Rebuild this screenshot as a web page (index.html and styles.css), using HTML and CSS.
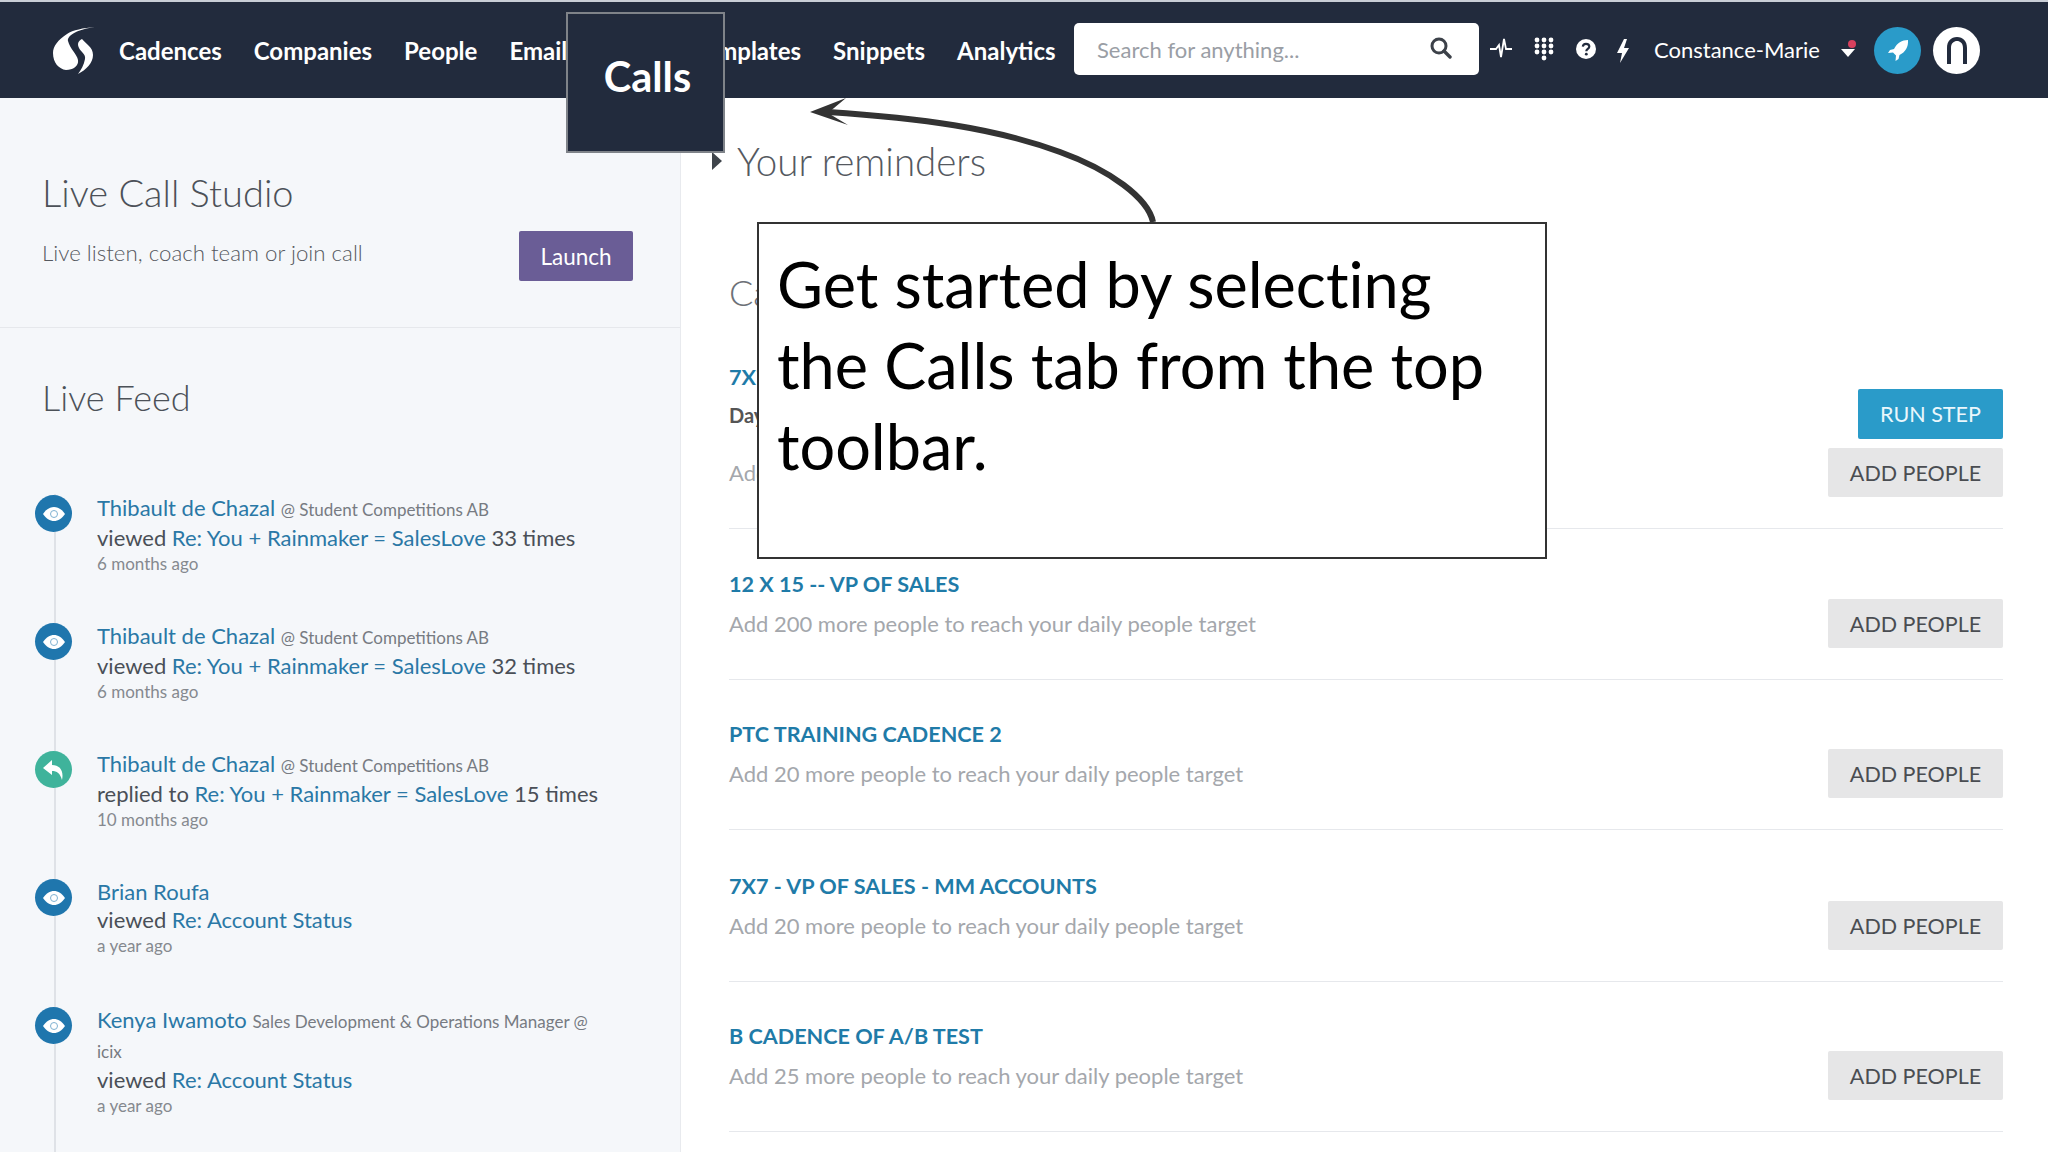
FILE: index.html
```html
<!DOCTYPE html>
<html lang="en">
<head>
<meta charset="utf-8">
<title>Calls</title>
<link rel="stylesheet" href="styles.css">
</head>
<body>
<header class="topbar">
  <svg class="logo" viewBox="0 0 42 47"><path fill="#fff" d="M42 0C30 1 20 3 14 7 5 13 0 19 0 26c0 10 6 16 13 17 7 0 13-4 12-10-1-6-8-11-10-19C14 8 26 2 42 0z"/><path fill="#fff" d="M29 12c-4 2-5 5-3 9 2 4 7 6 6 11-1 6-4 11-7 15 8-4 15-11 15-19 0-8-7-11-11-16z"/></svg>
  <nav class="nav">
    <a>Cadences</a><a>Companies</a><a>People</a><a>Emails</a><a class="after-tab">Templates</a><a>Snippets</a><a>Analytics</a>
  </nav>
  <div class="search">
    <span class="ph">Search for anything...</span>
    <svg class="ic-search" viewBox="0 0 22 22"><circle cx="9" cy="9" r="7" fill="none" stroke="#3c4149" stroke-width="3"/><path d="M14 14l6 6" stroke="#3c4149" stroke-width="3.4" stroke-linecap="round"/></svg>
  </div>
  <svg class="ic ic-pulse" viewBox="0 0 22 24"><path d="M0 12h6l3-4 2 12 3-18 2 10h6" fill="none" stroke="#fff" stroke-width="1.8"/></svg>
  <svg class="ic ic-grid" viewBox="0 0 20 24"><g fill="#fff"><circle cx="3" cy="3" r="2.400"/><circle cx="10" cy="3" r="2.400"/><circle cx="17" cy="3" r="2.400"/><circle cx="3" cy="9" r="2.400"/><circle cx="10" cy="9" r="2.400"/><circle cx="17" cy="9" r="2.400"/><circle cx="3" cy="15" r="2.400"/><circle cx="10" cy="15" r="2.400"/><circle cx="17" cy="15" r="2.400"/><circle cx="10" cy="21" r="2.400"/></g></svg>
  <svg class="ic ic-help" viewBox="0 0 20 20"><circle cx="10" cy="10" r="10" fill="#fff"/><path d="M6.800 7.600C7 5.600 8.400 4.800 10 4.800c2 0 3.300 1.100 3.300 2.700 0 2.400-3 2.300-3 4.700" fill="none" stroke="#222b3d" stroke-width="2.200"/><circle cx="10.300" cy="15.200" r="1.400" fill="#222b3d"/></svg>
  <svg class="ic ic-bolt" viewBox="0 0 12 24"><path fill="#fff" d="M7 0L0 14h5L3 24l9-15H7l3-9z"/></svg>
  <span class="user">Constance-Marie</span>
  <span class="caret"><i class="dot"></i></span>
  <span class="round rocket"><svg viewBox="0 0 24 24" width="24" height="24"><path fill="#fff" d="M22 2c-6 0-11 3-14 9l-4 1-2 3 5-.5 3 3L9.500 23l3-2 1-4c6-3 9-8 8.500-15z"/></svg></span>
  <span class="round avatar"><svg viewBox="0 0 30 34" width="30" height="34"><path d="M5 31V15C5 8 9 4 15 4s10 4 10 11v16h-4V15c0-5-3-7-6-7s-6 2-6 7v16z" fill="#222b3d"/></svg></span>
</header>

<div class="layout">
  <aside class="side">
    <section class="studio">
      <h2 class="h-side">Live Call Studio</h2>
      <div class="studio-row">
        <span class="studio-text">Live listen, coach team or join call</span>
        <button class="launch">Launch</button>
      </div>
    </section>
    <section class="feed">
      <h2 class="h-side">Live Feed</h2>
      <ol class="items">
        <li class="item">
          <span class="badge"><svg class="eye" viewBox="0 0 22 14"><path fill="#fff" d="M0 7c3-4.500 7-7 11-7s8 2.500 11 7c-3 4.500-7 7-11 7S3 11.500 0 7z"/><circle cx="11" cy="7" r="3.500" fill="none" stroke="#7fb2d2" stroke-width="1"/></svg></span>
          <div class="who"><a class="name">Thibault de Chazal</a> <small>@ Student Competitions AB</small></div>
          <div class="what">viewed <a>Re: You + Rainmaker = SalesLove</a> 33 times</div>
          <time>6 months ago</time>
        </li>
        <li class="item">
          <span class="badge"><svg class="eye" viewBox="0 0 22 14"><path fill="#fff" d="M0 7c3-4.500 7-7 11-7s8 2.500 11 7c-3 4.500-7 7-11 7S3 11.500 0 7z"/><circle cx="11" cy="7" r="3.500" fill="none" stroke="#7fb2d2" stroke-width="1"/></svg></span>
          <div class="who"><a class="name">Thibault de Chazal</a> <small>@ Student Competitions AB</small></div>
          <div class="what">viewed <a>Re: You + Rainmaker = SalesLove</a> 32 times</div>
          <time>6 months ago</time>
        </li>
        <li class="item">
          <span class="badge green"><svg class="reply" viewBox="0 0 22 20"><path fill="#fff" d="M9 0L0 8l9 7v-4c5 0 8 2 10 9 2-9-2-15-10-15z"/></svg></span>
          <div class="who"><a class="name">Thibault de Chazal</a> <small>@ Student Competitions AB</small></div>
          <div class="what">replied to <a>Re: You + Rainmaker = SalesLove</a> 15 times</div>
          <time>10 months ago</time>
        </li>
        <li class="item">
          <span class="badge"><svg class="eye" viewBox="0 0 22 14"><path fill="#fff" d="M0 7c3-4.500 7-7 11-7s8 2.500 11 7c-3 4.500-7 7-11 7S3 11.500 0 7z"/><circle cx="11" cy="7" r="3.500" fill="none" stroke="#7fb2d2" stroke-width="1"/></svg></span>
          <div class="who"><a class="name">Brian Roufa</a></div>
          <div class="what">viewed <a>Re: Account Status</a></div>
          <time>a year ago</time>
        </li>
        <li class="item">
          <span class="badge"><svg class="eye" viewBox="0 0 22 14"><path fill="#fff" d="M0 7c3-4.500 7-7 11-7s8 2.500 11 7c-3 4.500-7 7-11 7S3 11.500 0 7z"/><circle cx="11" cy="7" r="3.500" fill="none" stroke="#7fb2d2" stroke-width="1"/></svg></span>
          <div class="who"><a class="name">Kenya Iwamoto</a> <small>Sales Development &amp; Operations Manager @ icix</small></div>
          <div class="what">viewed <a>Re: Account Status</a></div>
          <time>a year ago</time>
        </li>
      </ol>
    </section>
  </aside>

  <main class="main">
    <div class="reminders"><i class="tri"></i><h2>Your reminders</h2></div>
    <h2 class="h-cad">Cadences</h2>
    <div class="row first">
      <div class="row-text">
        <a class="title">7X7 - VP OF SALES</a>
        <div class="day">Day 1</div>
        <div class="desc">Add 20 more people to reach your daily people target</div>
      </div>
      <div class="actions">
        <button class="btn run">RUN STEP</button>
        <button class="btn add">ADD PEOPLE</button>
      </div>
    </div>
    <div class="row second">
      <div class="row-text"><a class="title">12 X 15 -- VP OF SALES</a><div class="desc">Add 200 more people to reach your daily people target</div></div>
      <div class="actions"><button class="btn add">ADD PEOPLE</button></div>
    </div>
    <div class="row">
      <div class="row-text"><a class="title">PTC TRAINING CADENCE 2</a><div class="desc">Add 20 more people to reach your daily people target</div></div>
      <div class="actions"><button class="btn add">ADD PEOPLE</button></div>
    </div>
    <div class="row tall">
      <div class="row-text"><a class="title">7X7 - VP OF SALES - MM ACCOUNTS</a><div class="desc">Add 20 more people to reach your daily people target</div></div>
      <div class="actions"><button class="btn add">ADD PEOPLE</button></div>
    </div>
    <div class="row">
      <div class="row-text"><a class="title">B CADENCE OF A/B TEST</a><div class="desc">Add 25 more people to reach your daily people target</div></div>
      <div class="actions"><button class="btn add">ADD PEOPLE</button></div>
    </div>
  </main>
</div>

<div class="calls-tab">Calls</div>
<svg class="arrow" viewBox="0 0 360 130" width="360" height="130"><path d="M18 14C110 20 185 30 250 54 300 72 338 100 343 124" fill="none" stroke="#333" stroke-width="6"/><path d="M0 14L36 0 18 15 38 27z" fill="#333"/></svg>
<div class="callout">Get started by selecting the Calls tab from the top toolbar.</div>
</body>
</html>
```
FILE: styles.css
```css
* { box-sizing: border-box; }
html, body { margin: 0; padding: 0; }
body {
  width: 2048px; height: 1152px; overflow: hidden; position: relative;
  font-family: Lato, "Liberation Sans", sans-serif; background: #fff; color: #4a4f57;
}
a { color: inherit; text-decoration: none; }
h2 { margin: 0; font-weight: 300; }

.topbar {
  height: 98px; background: #222b3d; border-top: 2px solid #c9ced6;
  display: flex; align-items: center; color: #fff; padding-left: 53px;
}
.logo { width: 42px; height: 47px; flex: none; }
.nav { display: flex; gap: 32px; margin-left: 24px; font-size: 24px; font-weight: 700; width: 930px; flex: none; white-space: nowrap; }
.after-tab { margin-left: 83px; }
.search {
  width: 405px; height: 52px; background: #fff; border-radius: 5px;
  display: flex; align-items: center; justify-content: space-between;
  padding: 0 27px 0 23px; margin-top: -2px; margin-left: 25px; flex: none;
}
.ph { font-size: 22px; color: #9a9ea5; }
.ic-search { width: 22px; height: 22px; margin-top: -2px; }
.ic { flex: none; margin-top: -2px; }
.ic-pulse { width: 22px; height: 24px; margin-left: 11px; }
.ic-grid { width: 20px; height: 24px; margin-left: 22px; }
.ic-help { width: 20px; height: 20px; margin-left: 22px; }
.ic-bolt { width: 12px; height: 24px; margin-left: 21px; margin-top: 1px; }
.user { font-size: 22px; margin: -2px 0 0 25px; width: 166px; flex: none; }
.caret { position: relative; width: 0; height: 0; margin: 6px 0 0 21px; border: 7px solid transparent; border-top: 8px solid #fff; border-bottom: 0; flex: none; }
.dot { position: absolute; left: 0; top: -17px; width: 8px; height: 8px; border-radius: 50%; background: #d8405e; }
.round { width: 47px; height: 47px; border-radius: 50%; display: flex; align-items: center; justify-content: center; flex: none; }
.rocket { background: #2a9bc9; margin-left: 19px; }
.avatar { background: #fff; margin-left: 12px; }

.layout { display: flex; height: 1054px; }
.side { width: 681px; flex: none; background: #f5f7fa; border-right: 1px solid #e8eaee; overflow: hidden; }
.studio { height: 230px; border-bottom: 1px solid #e6e8ec; padding: 72px 47px 0 42px; }
.h-side { font-size: 36px; color: #4c5158; line-height: 44px; }
.studio .h-side { font-size: 38px; }
.studio-row { display: flex; justify-content: space-between; align-items: center; margin-top: 17px; font-size: 22.300px; color: #55595f; font-weight: 300; }
.studio-text { margin-top: -8px; }
.launch { width: 114px; height: 50px; background: #6a5d96; color: #fff; border: 0; border-radius: 2px; font: 400 22.5px Lato, sans-serif; }
.feed { padding: 47px 77px 0 35px; }
.feed .h-side { padding-left: 7px; }
.items { list-style: none; margin: 75px 0 0; padding: 0; }
.item { position: relative; padding-left: 62px; height: 128px; }
.item::before { content: ""; position: absolute; left: 19px; top: 0; bottom: 0; width: 2px; background: #dfe2e7; }
.item:last-child { height: 200px; }
.badge { position: absolute; left: 0; top: 1px; width: 37px; height: 37px; border-radius: 50%; background: #1f76ad; display: flex; align-items: center; justify-content: center; }
.badge.green { background: #3fb39b; }
.eye { width: 22px; height: 14px; }
.reply { width: 22px; height: 20px; }
.who { font-size: 22px; line-height: 28px; color: #8a8e94; }
.name { color: #2a78a6; }
small { font-size: 17px; color: #777b82; line-height: 28px; }
.what { font-size: 22px; line-height: 28px; color: #4a4f57; }
.what a { color: #2a78a6; }
time { display: block; font-size: 17px; line-height: 24px; color: #85898f; }

.main { flex: 1; padding: 41px 45px 0 48px; position: relative; }
.reminders { display: flex; align-items: center; margin-left: -17px; gap: 15px; height: 44px; }
.tri { width: 0; height: 0; border: 9px solid transparent; border-left: 10px solid #3f444b; border-right: 0; }
.reminders h2 { font-size: 38.5px; color: #55595f; }
.h-cad { font-size: 36px; color: #6d7177; margin-top: 87px; height: 44px; line-height: 44px; }
.row { display: flex; justify-content: space-between; align-items: flex-end; border-bottom: 1px solid #e6e8ec; height: 150px; padding-bottom: 31px; }
.row.first { height: 215px; }
.row.second { height: 151px; }
.row.tall { height: 152px; }
.row-text { padding-bottom: 11px; }
.title { display: block; color: #1f7ba8; font-weight: 700; font-size: 21.6px; line-height: 28px; margin-bottom: 12px; }
.day { font-weight: 700; font-size: 20px; margin: 6px 0 32px; color: #555; }
.desc { font-size: 22px; color: #a4a7ac; }
.actions { display: flex; flex-direction: column; align-items: flex-end; gap: 9px; }
.btn { height: 49px; border: 0; border-radius: 2px; font: 400 21.5px Lato, sans-serif; }
.run { width: 145px; height: 50px; background: #2a9bc9; color: #eaf7fc; }
.add { width: 175px; background: #e6e6e7; color: #4a4d52; }

.calls-tab {
  position: absolute; left: 566px; top: 12px; width: 159px; height: 141px;
  background: #222b3d; border: 2px solid #7f8389; color: #fff;
  font-size: 41.500px; font-weight: 700; display: flex; align-items: center; justify-content: center; padding: 0 0 14px 4px;
}
.arrow { position: absolute; left: 810px; top: 98px; }
.callout {
  position: absolute; left: 757px; top: 222px; width: 790px; height: 337px;
  background: #fff; border: 2px solid #333; padding: 19px 30px 0 18px;
  font-size: 63px; line-height: 81px; color: #000; font-variant-ligatures: none;
}
```
